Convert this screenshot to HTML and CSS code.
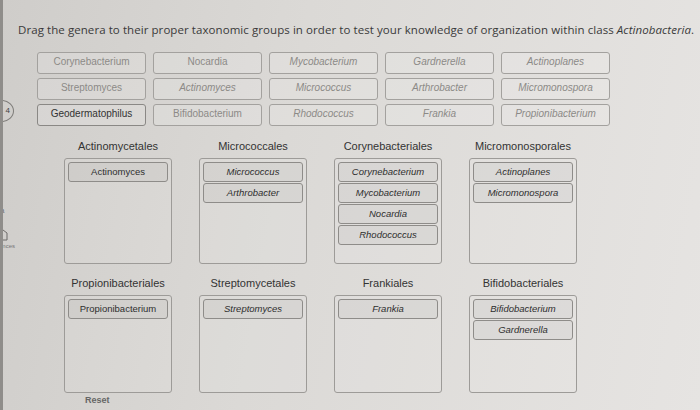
FILE: index.html
```html
<!DOCTYPE html>
<html>
<head>
<meta charset="utf-8">
<link rel="stylesheet" href="styles.css">
</head>
<body>
<div class="screen">
  <aside class="rail">
    <div class="step">4</div>
    <div class="rail-a">a</div>
    <svg class="rail-icon" width="10" height="12" viewBox="0 0 10 12"><path d="M1 11 V4 L5 1 L9 4 V11 Z" fill="none" stroke="#6d6b68" stroke-width="1"/></svg>
    <div class="rail-text">ences</div>
  </aside>
  <main class="content">
    <p class="prompt">Drag the genera to their proper taxonomic groups in order to test your knowledge of organization within class <em>Actinobacteria</em>.</p>
    <div class="bank">
      <div class="token">Corynebacterium</div>
      <div class="token">Nocardia</div>
      <div class="token it">Mycobacterium</div>
      <div class="token it">Gardnerella</div>
      <div class="token it">Actinoplanes</div>
      <div class="token">Streptomyces</div>
      <div class="token it">Actinomyces</div>
      <div class="token it">Micrococcus</div>
      <div class="token it">Arthrobacter</div>
      <div class="token it">Micromonospora</div>
      <div class="token active">Geodermatophilus</div>
      <div class="token">Bifidobacterium</div>
      <div class="token it">Rhodococcus</div>
      <div class="token it">Frankia</div>
      <div class="token it">Propionibacterium</div>
    </div>
    <div class="groups">
      <section class="group">
        <h3 class="title">Actinomycetales</h3>
        <div class="bin"><div class="item">Actinomyces</div></div>
      </section>
      <section class="group">
        <h3 class="title">Micrococcales</h3>
        <div class="bin"><div class="item it">Micrococcus</div><div class="item it">Arthrobacter</div></div>
      </section>
      <section class="group">
        <h3 class="title">Corynebacteriales</h3>
        <div class="bin"><div class="item it">Corynebacterium</div><div class="item it">Mycobacterium</div><div class="item it">Nocardia</div><div class="item it">Rhodococcus</div></div>
      </section>
      <section class="group">
        <h3 class="title">Micromonosporales</h3>
        <div class="bin"><div class="item it">Actinoplanes</div><div class="item it">Micromonospora</div></div>
      </section>
      <section class="group low">
        <h3 class="title">Propionibacteriales</h3>
        <div class="bin"><div class="item">Propionibacterium</div></div>
      </section>
      <section class="group low">
        <h3 class="title">Streptomycetales</h3>
        <div class="bin"><div class="item it">Streptomyces</div></div>
      </section>
      <section class="group low">
        <h3 class="title">Frankiales</h3>
        <div class="bin"><div class="item it">Frankia</div></div>
      </section>
      <section class="group low">
        <h3 class="title">Bifidobacteriales</h3>
        <div class="bin"><div class="item it">Bifidobacterium</div><div class="item it">Gardnerella</div></div>
      </section>
    </div>
    <div class="reset">Reset</div>
  </main>
</div>
</body>
</html>
```
FILE: styles.css
```css
html, body {
  margin: 0;
  padding: 0;
}
body {
  width: 700px;
  height: 410px;
  overflow: hidden;
  font-family: "Liberation Sans", Arial, sans-serif;
  color: #333;
}
.screen {
  display: flex;
  width: 700px;
  height: 410px;
  box-sizing: border-box;
  border-left: 3px solid #8f8d8a;
  background: linear-gradient(100deg, #cfcdca 0%, #dbd9d6 40%, #e6e4e2 100%);
  overflow: hidden;
}
.rail {
  width: 10px;
  flex: none;
  display: flex;
  flex-direction: column;
  align-items: flex-start;
}
.step {
  margin-top: 100px;
  margin-left: -14px;
  width: 20px;
  height: 20px;
  border: 1px solid #7e7c79;
  border-radius: 50%;
  font-size: 8px;
  line-height: 20px;
  text-align: right;
  padding-right: 3px;
  box-sizing: content-box;
  color: #444;
}
.rail-a {
  margin-top: 84px;
  margin-left: -3px;
  font-size: 8px;
  color: #777;
}
.rail-icon {
  margin-top: 14px;
  margin-left: -5px;
}
.rail-text {
  margin-top: 2px;
  margin-left: -4px;
  font-size: 6px;
  color: #777;
}
.content {
  flex: 1;
  display: flex;
  flex-direction: column;
  align-items: flex-start;
}
.prompt {
  margin: 0;
  padding: 23px 0 0 5px;
  font-family: "Open Sans", "Liberation Sans", sans-serif;
  font-size: 11.5px;
  line-height: 14px;
  color: #3a3a3a;
  white-space: nowrap;
  letter-spacing: 0.07px;
}
.prompt em {
  font-style: italic;
}
.bank {
  margin: 15px 0 0 24px;
  display: grid;
  grid-template-columns: repeat(5, 109px);
  grid-auto-rows: 22px;
  gap: 4px 7px;
}
.token {
  box-sizing: border-box;
  border: 1px solid #a3a19e;
  border-radius: 3px;
  background: rgba(255, 255, 255, 0.14);
  font-size: 10px;
  line-height: 18px;
  text-align: center;
  color: #8c8a87;
}
.token.it, .item.it {
  font-style: italic;
}
.token.active {
  color: #333;
  border-color: #8a8885;
}
.groups {
  margin: 13px 0 0 51px;
  display: grid;
  grid-template-columns: repeat(4, 108px);
  column-gap: 27px;
  row-gap: 12px;
}
.group {
  display: flex;
  flex-direction: column;
}
.title {
  margin: 0 0 5px 0;
  font-size: 11px;
  line-height: 14px;
  font-weight: normal;
  text-align: center;
  color: #333;
  white-space: nowrap;
}
.bin {
  box-sizing: border-box;
  height: 106px;
  border: 1px solid #9d9b98;
  border-radius: 3px;
  padding: 3px;
  display: flex;
  flex-direction: column;
  gap: 1px;
  background: rgba(255, 255, 255, 0.08);
}
.group.low .bin {
  height: 98px;
}
.item {
  box-sizing: border-box;
  height: 20px;
  border: 1px solid #8e8c89;
  border-radius: 3px;
  background: rgba(0, 0, 0, 0.03);
  font-size: 9.5px;
  line-height: 18px;
  text-align: center;
  color: #2e2e2e;
}
.reset {
  margin: 2px 0 0 72px;
  font-size: 9px;
  line-height: 10px;
  font-weight: bold;
  color: #666;
}
```
